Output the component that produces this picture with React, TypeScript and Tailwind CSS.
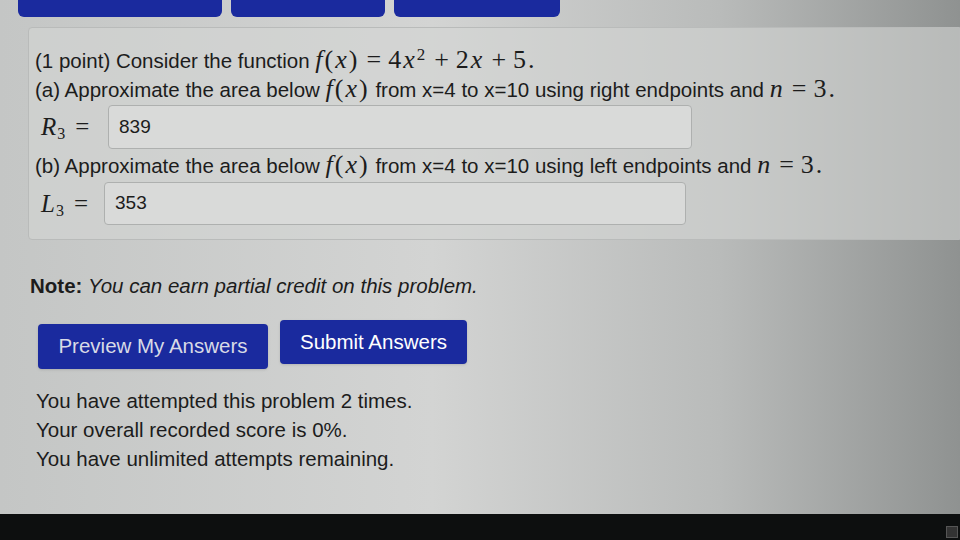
import { ReactElement } from 'react';

const M = ({ children }: { children: React.ReactNode }) => (
  <span className="italic font-['Liberation_Serif',serif] text-[26px] tracking-[2px]">{children}</span>
);

const S = ({ children }: { children: React.ReactNode }) => (
  <span className="font-['Liberation_Serif',serif] text-[26px] tracking-[2px]">{children}</span>
);

const Op = ({ children }: { children: React.ReactNode }) => (
  <span className="font-['Liberation_Serif',serif] text-[26px] mx-[7px]">{children}</span>
);

const App = (): ReactElement => {
  return (
    <div className="w-[960px] h-[540px] overflow-hidden flex flex-col bg-[linear-gradient(90deg,#c4c6c5_0%,#d3d4d3_45%,#b9bbba_75%,#8f9291_100%)] font-['Liberation_Sans',Arial,sans-serif] text-[#1c1c1c]">
      {/* top nav buttons, cut off */}
      <div className="h-[17px] flex items-end gap-[9px] pl-[18px] overflow-hidden shrink-0">
        <div className="w-[204px] h-[40px] rounded-b-md bg-[#1a2a9e] shrink-0" />
        <div className="w-[154px] h-[40px] rounded-b-md bg-[#1a2a9e] shrink-0" />
        <div className="w-[166px] h-[40px] rounded-b-md bg-[#1a2a9e] shrink-0" />
      </div>

      {/* problem box */}
      <div className="mt-[10px] ml-[28px] h-[213px] border border-[#b9bbba] rounded-l-sm bg-[#d4d5d4]/60 pl-[6px] pt-[18px] text-[20.5px] shrink-0">
        <div className="leading-[28px] whitespace-nowrap">
          (1 point) Consider the function <M>f</M><S>(</S><M>x</M><S>)</S><Op>=</Op><S>4</S><M>x</M><sup className="font-['Liberation_Serif',serif] text-[17px] mr-[2px]">2</sup><Op>+</Op><S>2</S><M>x</M><Op>+</Op><S>5.</S>
        </div>
        <div className="leading-[28px] whitespace-nowrap">
          (a) Approximate the area below <M>f</M><S>(</S><M>x</M><S>)</S> from x=4 to x=10 using right endpoints and <M>n</M><Op>=</Op><S>3.</S>
        </div>
        <div className="flex items-center mt-[1px] h-[44px]">
          <span className="w-[73px] pl-[6px] font-['Liberation_Serif',serif] text-[25px] whitespace-nowrap">
            <i className="tracking-[1px]">R</i><sub className="text-[16px] not-italic">3</sub><span className="ml-[10px]">=</span>
          </span>
          <div className="w-[584px] h-[44px] border border-[#aeb0af] rounded bg-[#d9dad9] flex items-center pl-[10px] text-[19px]">839</div>
        </div>
        <div className="leading-[28px] mt-[2px] whitespace-nowrap">
          (b) Approximate the area below <M>f</M><S>(</S><M>x</M><S>)</S> from x=4 to x=10 using left endpoints and <M>n</M><Op>=</Op><S>3.</S>
        </div>
        <div className="flex items-center mt-[2px] h-[43px]">
          <span className="w-[69px] pl-[6px] font-['Liberation_Serif',serif] text-[25px] whitespace-nowrap">
            <i className="tracking-[1px]">L</i><sub className="text-[16px] not-italic">3</sub><span className="ml-[10px]">=</span>
          </span>
          <div className="w-[582px] h-[43px] border border-[#aeb0af] rounded bg-[#d9dad9] flex items-center pl-[10px] text-[19px]">353</div>
        </div>
      </div>

      <div className="ml-[30px] mt-[34px] text-[20.5px] leading-[24px]">
        <b>Note:</b> <i>You can earn partial credit on this problem.</i>
      </div>

      <div className="ml-[38px] mt-[22px] flex items-start gap-[12px]">
        <button className="mt-[4px] w-[230px] h-[45px] rounded bg-[#1a2a9e] text-[#d8dae6] text-[20.5px] shadow">Preview My Answers</button>
        <button className="w-[187px] h-[44px] rounded bg-[#1a2a9e] text-white text-[20.5px] shadow">Submit Answers</button>
      </div>

      <div className="ml-[36px] mt-[17px] text-[20.5px] leading-[29px]">
        <p>You have attempted this problem 2 times.</p>
        <p>Your overall recorded score is 0%.</p>
        <p>You have unlimited attempts remaining.</p>
      </div>

      <div className="mt-auto h-[26px] bg-[#0d0f0f] shrink-0 flex justify-end items-end pr-[2px] pb-[2px]">
        <div className="w-[12px] h-[12px] border border-[#555] bg-[#333]" />
      </div>
    </div>
  );
};

export default App;
